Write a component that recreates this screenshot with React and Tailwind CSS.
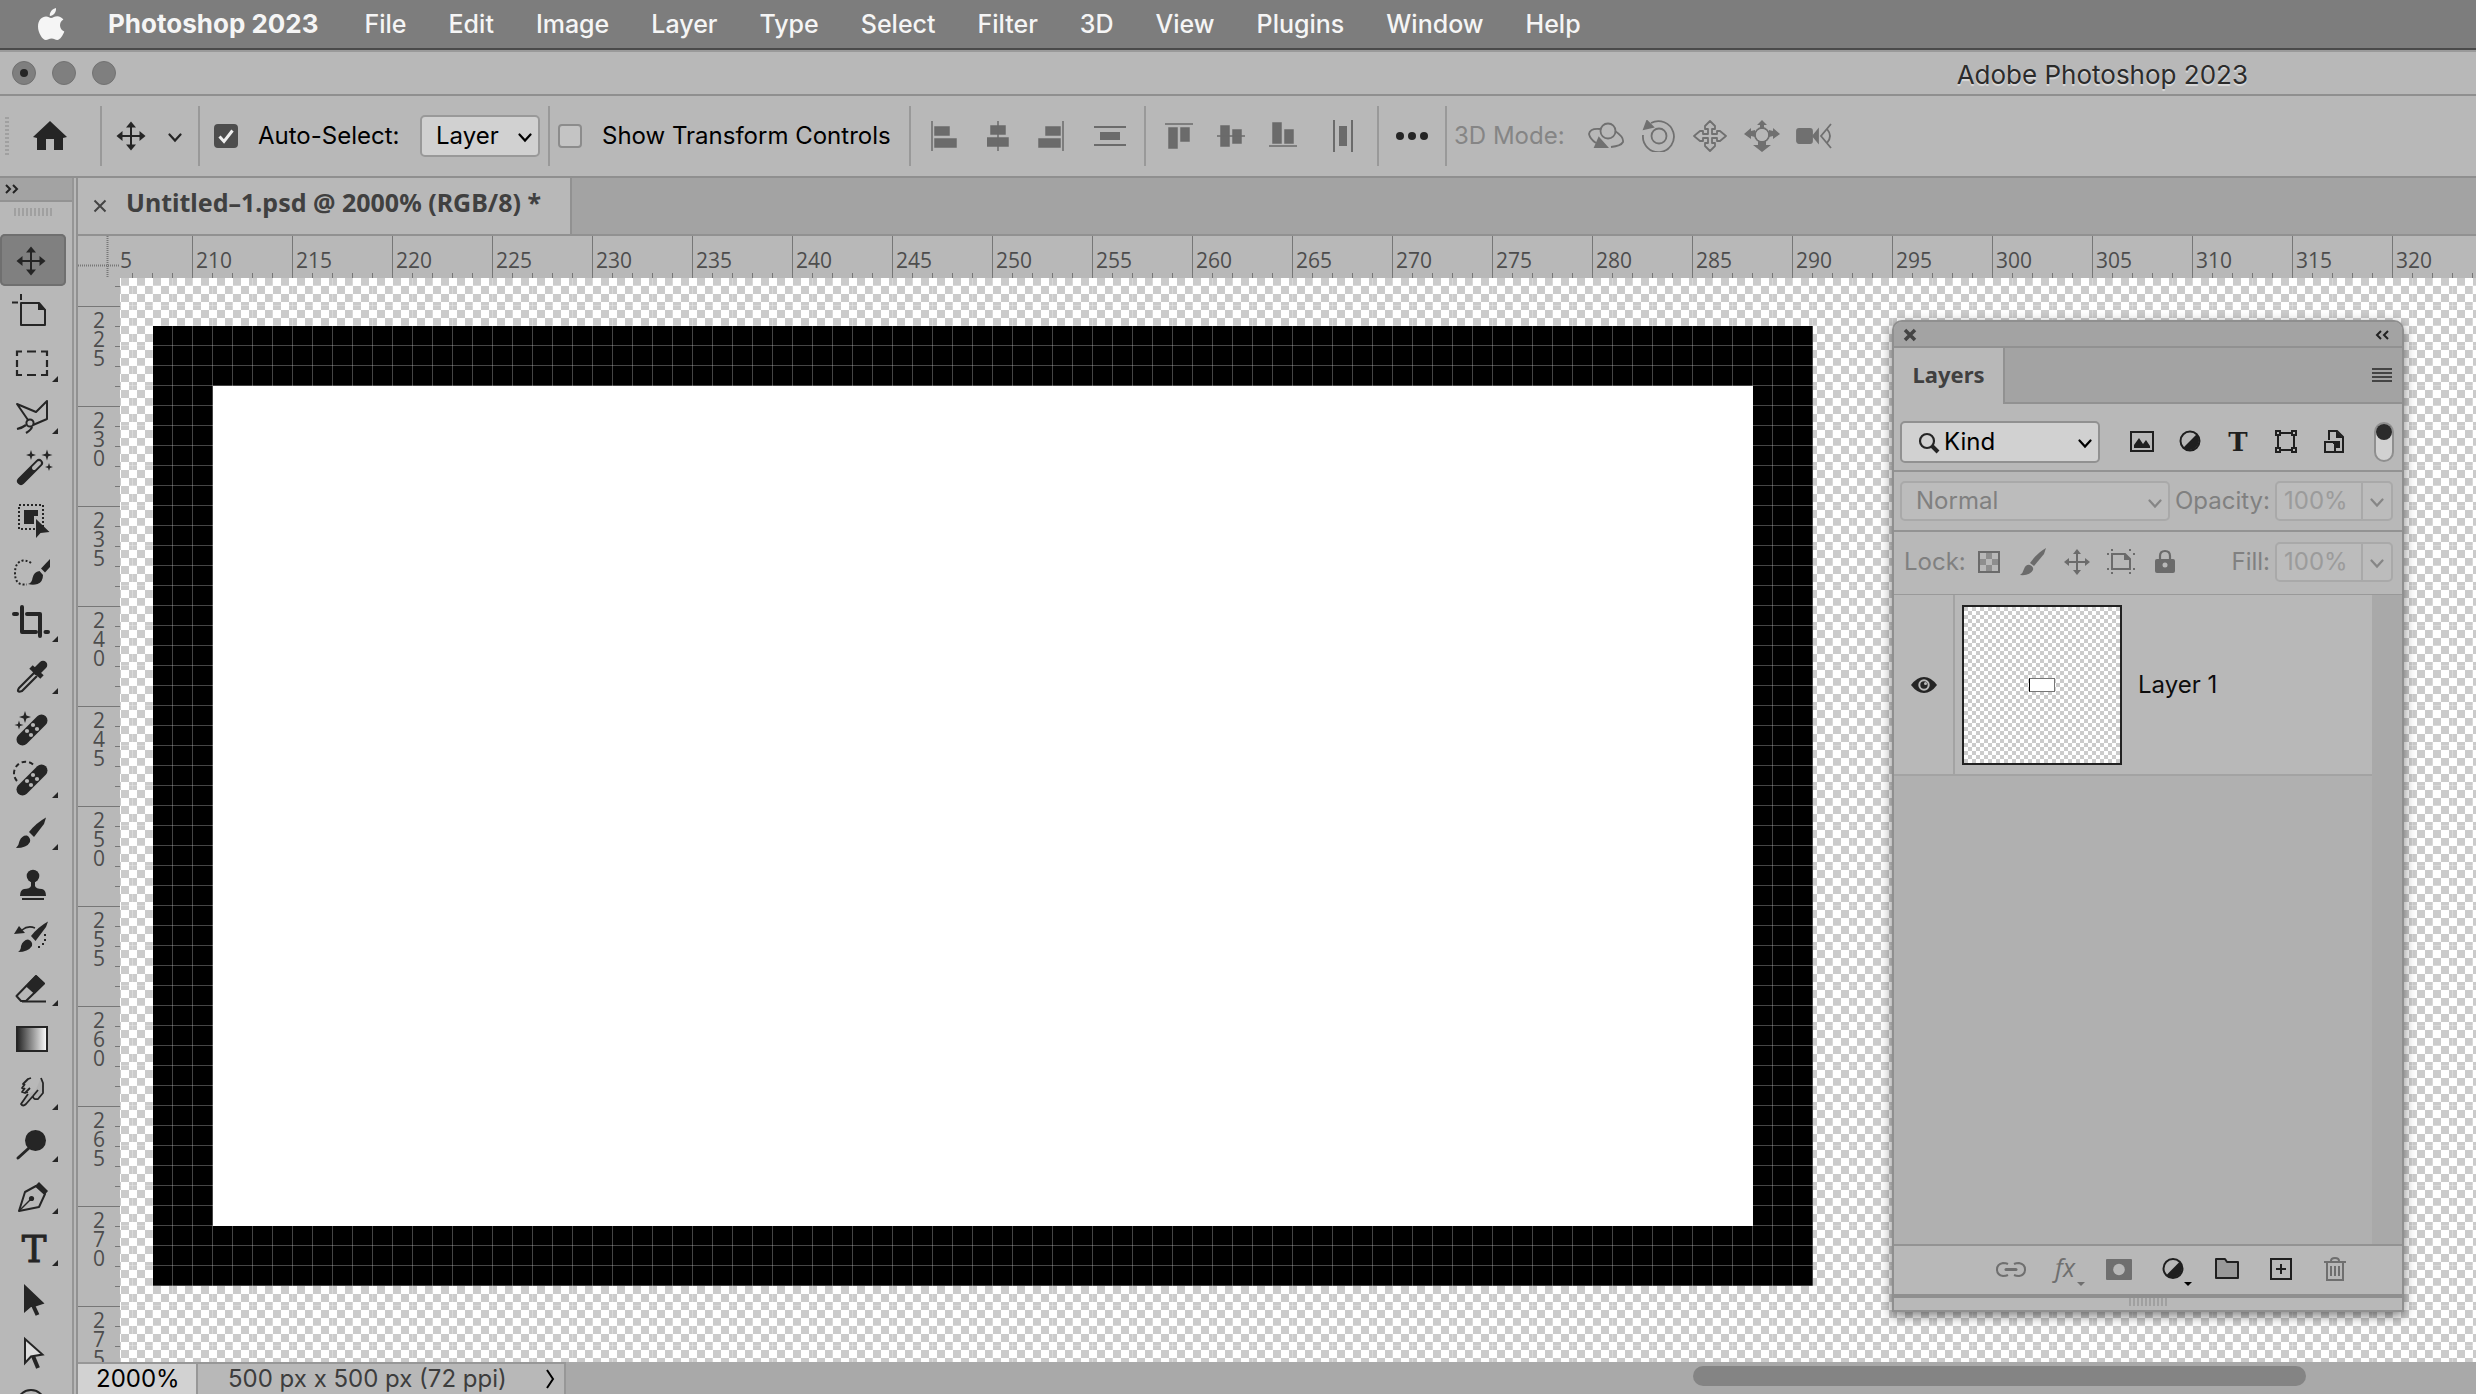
import { useState } from 'react'

const MENUS = ['File', 'Edit', 'Image', 'Layer', 'Type', 'Select', 'Filter', '3D', 'View', 'Plugins', 'Window', 'Help']

const H_TICKS = Array.from({ length: 24 }, (_, i) => 205 + i * 5)
const V_TICKS = Array.from({ length: 12 }, (_, i) => 220 + i * 5)

const INK = '#252525'
const SPARK = 'M0 -5 L1.2 -1.2 L5 0 L1.2 1.2 L0 5 L-1.2 1.2 L-5 0 L-1.2 -1.2 Z'

function Svg({ w, h, className = '', children }) {
  return (
    <svg width={w} height={h} viewBox={`0 0 ${w} ${h}`} fill="none" className={`block shrink-0 ${className}`} aria-hidden="true">
      {children}
    </svg>
  )
}

function Chevron({ className = '' }) {
  return (
    <Svg w={14} h={10} className={className}>
      <path d="M1.5 1.5 L7 7.5 L12.5 1.5" stroke="currentColor" strokeWidth="2.2" strokeLinecap="round" />
    </Svg>
  )
}

function Divider() {
  return <div className="w-[2px] h-[60px] shrink-0 bg-[#999999]" />
}

function Bandage({ dy = 0 }) {
  return (
    <g transform={`translate(0 ${dy})`}>
      <path d="M22.5 37.5 L41.5 18.5" stroke={INK} strokeWidth="12" strokeLinecap="round" />
      <g fill="#b8b8b8">
        <circle cx="27" cy="29" r="2.1" />
        <circle cx="31" cy="33" r="2.1" />
        <circle cx="33" cy="23" r="2.1" />
        <circle cx="37" cy="27" r="2.1" />
      </g>
    </g>
  )
}

function MoveArrows({ cx, cy, r, head = 5, sw = 2 }) {
  return (
    <g transform={`translate(${cx} ${cy})`}>
      <path d={`M${-r + 3} 0 H${r - 3} M0 ${-r + 3} V${r - 3}`} stroke="currentColor" strokeWidth={sw} />
      {[0, 90, 180, 270].map((a) => (
        <path key={a} transform={`rotate(${a})`} d={`M0 ${-r} L${head} ${-r + head + 1} H${-head} Z`} fill="currentColor" />
      ))}
    </g>
  )
}

// Every tool is drawn in the 66x52 box of its own button
const TOOLS = [
  { name: 'Move', art: <MoveArrows cx={31} cy={27} r={14.5} /> },
  {
    name: 'Artboard',
    art: (
      <>
        <path d="M12 16.5 H18 M21 8 V14" stroke={INK} strokeWidth="2" />
        <path d="M21 17 H39 L45 24 V39 H21 Z" stroke={INK} strokeWidth="2" strokeLinejoin="round" />
        <path d="M38 16 L46 24 H38 Z" fill={INK} />
      </>
    )
  },
  {
    name: 'Marquee',
    fly: true,
    art: (
      <path
        d="M17 18 V13.5 H22 M27 13.5 H36 M41 13.5 H47 V18 M47 22 V29 M47 32 V37 H41 M36 37 H27 M22 37 H17 V32 M17 29 V22"
        stroke={INK}
        strokeWidth="2.2"
      />
    )
  },
  {
    name: 'Polygonal Lasso',
    fly: true,
    art: (
      <>
        <path d="M28 30 L17 14 L36 22 L47 11 V29 L33 35" stroke={INK} strokeWidth="2" strokeLinejoin="round" />
        <circle cx="30" cy="33" r="3.6" stroke={INK} strokeWidth="2" />
        <path d="M17 39 Q22 38 26 35 M26 43 Q31 40 32 37" stroke={INK} strokeWidth="2.2" />
      </>
    )
  },
  {
    name: 'Magic Wand',
    art: (
      <>
        <path d="M21 39 L39 21" stroke={INK} strokeWidth="8" strokeLinecap="round" />
        <path d="M34 26 L39 21" stroke="#b8b8b8" strokeWidth="4" strokeLinecap="round" />
        <g fill={INK}>
          <path transform="translate(31 13)" d={SPARK} />
          <path transform="translate(47 13) scale(1.1)" d={SPARK} />
          <path transform="translate(49 25) scale(.8)" d={SPARK} />
        </g>
      </>
    )
  },
  {
    name: 'Object Selection',
    art: (
      <>
        <rect x="19" y="11" width="24" height="24" stroke={INK} strokeWidth="2" strokeDasharray="2 2" />
        <path d="M24 16 H38 V22 H34 V30 H24 Z" fill={INK} />
        <path d="M36 25 V44 L40.5 39 L49.5 38 Z" fill={INK} />
      </>
    )
  },
  {
    name: 'Quick Selection',
    art: (
      <>
        <path d="M31 17 Q28 14.5 23 14.5 Q15 16 15 27 Q15 38 23 38.5 H27" stroke={INK} strokeWidth="2" strokeDasharray="2 2" />
        <path d="M50 13 V21 L45 26.5 L41 22.5 Z" fill={INK} />
        <path d="M28 38 Q32 37 32.5 32 Q34 25.5 39.5 25 L43 29 Q43 36 37.5 38 Q33 39.5 28 38 Z" fill={INK} />
      </>
    )
  },
  {
    name: 'Crop',
    fly: true,
    art: (
      <path
        d="M22 9 V34 H36 M45.5 34 H48 M14 16 H17 M27 16 H40 V29 M40 26 V38"
        stroke={INK}
        strokeWidth="4"
        strokeLinecap="round"
        strokeLinejoin="round"
      />
    )
  },
  {
    name: 'Eyedropper',
    fly: true,
    art: (
      <>
        <path d="M34 23 L19 38 Q16 43 22 41 L37 26" stroke={INK} strokeWidth="2.2" strokeLinejoin="round" />
        <path d="M31 17 L42 27" stroke={INK} strokeWidth="5" />
        <path d="M37 21 L43 15" stroke={INK} strokeWidth="8.5" strokeLinecap="round" />
      </>
    )
  },
  {
    name: 'Spot Healing Brush',
    art: (
      <>
        <Bandage />
        <path transform="translate(25 15) scale(1.2)" d={SPARK} fill={INK} />
        <path transform="translate(19 23) scale(.9)" d={SPARK} fill={INK} />
      </>
    )
  },
  {
    name: 'Healing Brush',
    fly: true,
    art: (
      <>
        <Bandage dy={-2} />
        <path d="M17 27 A10 10 0 1 1 34 11.5" stroke={INK} strokeWidth="2" strokeDasharray="4.5 3" />
      </>
    )
  },
  {
    name: 'Brush',
    fly: true,
    art: (
      <>
        <path d="M46 11.5 L44 18 L34 31 L29 26 Q36 17 46 11.5 Z" fill={INK} />
        <path d="M16 42 Q19 39 19.5 35 Q22 29 27 29.5 Q31 32 30 36 Q27 42 16 42 Z" fill={INK} />
      </>
    )
  },
  {
    name: 'Clone Stamp',
    art: (
      <>
        <circle cx="33" cy="18" r="6.3" fill={INK} />
        <path d="M31 22 H35 V28 Q36 31 42 31 Q46 32 46 38 H20 Q20 32 24 31 Q30 31 31 28 Z" fill={INK} />
        <path d="M22 41 H44" stroke={INK} strokeWidth="2" />
      </>
    )
  },
  {
    name: 'History Brush',
    art: (
      <>
        <path d="M48 11.5 L46 17 L35.5 31 L31 26 Q38 17 48 11.5 Z" fill={INK} />
        <path d="M18 42 Q21 40 21 36 Q23 30 28 29.5 Q33 31 32 36 Q28 42 18 42 Z" fill={INK} />
        <path d="M19 16 L14 24 L25 23 Z" fill={INK} />
        <path d="M22 20 Q28 15 35 18" stroke={INK} strokeWidth="1.5" />
        <path d="M44 24 h2 v2 h-2z M44 29 h2 v2 h-2z M42 33 h2 v2 h-2z M38 36 h2 v2 h-2z" fill={INK} />
      </>
    )
  },
  {
    name: 'Eraser',
    fly: true,
    art: (
      <>
        <path d="M36 14 L44 21.5 L26 39 H21 L16.5 34 Z" stroke={INK} strokeWidth="2" strokeLinejoin="round" />
        <path d="M36 13 L45 21.5 L34.5 32 L25.5 24 Z" fill={INK} />
        <path d="M22 39.5 H46" stroke={INK} strokeWidth="2" />
      </>
    )
  },
  {
    name: 'Gradient',
    art: (
      <>
        <defs>
          <linearGradient id="toolGradient">
            <stop offset="0" stopColor="#222" />
            <stop offset="1" stopColor="#fff" />
          </linearGradient>
        </defs>
        <rect x="17" y="13" width="30" height="24" fill="url(#toolGradient)" stroke={INK} strokeWidth="2" />
      </>
    )
  },
  {
    name: 'Smudge',
    fly: true,
    art: (
      <path
        d="M31 12 L28 13 L23 18 L25 19 M25 18 L22 22 L24 23 M25 22 L22 26 L25 27 L30 22 M25 27 L28 26 M28 28 L21 38 Q23 41 26 38 L33 30 L38 24 M33 30 Q33 34 38 33 L43 27 V17 L41 12"
        fill="#b0b0b0"
        stroke={INK}
        strokeWidth="1.8"
        strokeLinejoin="round"
      />
    )
  },
  {
    name: 'Dodge',
    fly: true,
    art: (
      <>
        <circle cx="35.5" cy="22.5" r="10.5" fill={INK} />
        <path d="M29 30 L18 40" stroke={INK} strokeWidth="3" strokeLinecap="round" />
      </>
    )
  },
  {
    name: 'Pen',
    fly: true,
    art: (
      <>
        <path d="M19 41 L25 22 L36 16 L45 24 L39 37 Z" stroke={INK} strokeWidth="2" strokeLinejoin="round" />
        <path d="M35 16 L39 12 L48 21 L44.5 25 Z" fill={INK} />
        <circle cx="31.5" cy="28.5" r="2.6" fill={INK} />
        <path d="M19 41 L31 29" stroke={INK} strokeWidth="1.5" />
      </>
    )
  },
  {
    name: 'Type',
    fly: true,
    art: (
      <text x="34" y="40" textAnchor="middle" fontFamily="DejaVu Serif" fontWeight="400" fontSize="37" fill={INK} stroke={INK} strokeWidth="1">
        T
      </text>
    )
  },
  {
    name: 'Path Selection',
    art: (
      <>
        <path d="M24 10 V39 L31 33 H34 L44.5 29.5 Z" fill={INK} />
        <path d="M32 29 L37.5 41" stroke={INK} strokeWidth="4" />
      </>
    )
  },
  {
    name: 'Direct Selection',
    art: (
      <>
        <path d="M25 13 V37 L31 30.5 L42.5 28.5 Z" fill="#dedede" stroke={INK} strokeWidth="2" />
        <path d="M33 30 L38 42" stroke={INK} strokeWidth="4" />
      </>
    )
  },
  { name: 'Ellipse', art: <circle cx="31" cy="26" r="14" stroke={INK} strokeWidth="2" /> }
]

const ALIGN_H = [
  { name: 'Align left edges', w: 26, art: <path d="M1 0 v30 M4 6 h14 v8 h-14z M4 18 h21 v8 h-21z" /> },
  { name: 'Align horizontal centers', w: 22, art: <path d="M11 0 v30 M4 5 h14 v8 h-14z M0 17 h21 v8 h-21z" /> },
  { name: 'Align right edges', w: 26, art: <path d="M25 0 v30 M8 6 h14 v8 h-14z M1 18 h21 v8 h-21z" /> }
]

const ALIGN_V = [
  { name: 'Align top edges', art: <path d="M0 4 h28 M4 8 h8 v20 h-8z M16 8 h8 v13 h-8z" /> },
  { name: 'Align vertical centers', art: <path d="M0 16 h28 M4 6 h8 v20 h-8z M16 10 h8 v13 h-8z" /> },
  { name: 'Align bottom edges', art: <path d="M0 26 h28 M4 3 h8 v20 h-8z M16 10 h8 v13 h-8z" /> }
]

const MODES_3D = [
  {
    name: 'Orbit',
    art: (
      <>
        <ellipse cx="20" cy="11" rx="7.5" ry="7.5" />
        <path d="M12 9 Q2 8 1 14 Q2 19 8 23 M27 11 Q36 17 35 22 Q33 26 23 27" />
        <path d="M11 18 L19 27 H7 Z" fill="currentColor" />
      </>
    )
  },
  {
    name: 'Roll',
    art: (
      <>
        <circle cx="19" cy="16" r="7.5" />
        <path d="M11 3 A15.5 15.5 0 1 1 3 15" />
        <path d="M7 1 L13 7 L4 9 Z" fill="currentColor" />
      </>
    )
  },
  {
    name: 'Pan',
    art: (
      <path d="M18 1 L23 6 V9 H20 V14 H25 V11 H28 L34 16 L28 21 H25 V18 H20 V23 H23 V26 L18 31 L13 26 V23 H16 V18 H11 V21 H8 L2 16 L8 11 H11 V14 H16 V9 H13 V6 Z" strokeLinejoin="round" />
    )
  },
  {
    name: 'Slide',
    art: (
      <>
        <circle cx="18" cy="15" r="7" />
        <path d="M18 0 L23 5 H20 V8 H16 V5 H13 Z M0 14 L7 8 V11 L11 10 V17 L7 16 V19 Z M36 14 L29 8 V11 L25 10 V17 L29 16 V19 Z M14 21 H22 V25 H27 L18 32 L9 25 H14 Z" fill="currentColor" stroke="none" />
        <circle cx="18" cy="15" r="6" fill="#b8b8b8" stroke="none" />
      </>
    )
  },
  {
    name: 'Zoom camera',
    art: (
      <>
        <rect x="1" y="9" width="15" height="14" rx="2" fill="currentColor" />
        <path d="M17 16 L22 10 V22 Z" fill="currentColor" />
        <path d="M35 4 L25 16 L35 28 M31 9 Q37 16 31 23" />
      </>
    )
  }
]

const FILTERS = [
  {
    name: 'Pixel layers',
    art: (
      <>
        <rect x="3" y="4" width="22" height="19" stroke="currentColor" strokeWidth="2" />
        <path d="M6 20 V17 L11 10 L15 16 L18 12 L22 18 V20 Z" fill="currentColor" />
      </>
    )
  },
  {
    name: 'Adjustment layers',
    art: (
      <>
        <circle cx="14" cy="13" r="9.5" stroke="currentColor" strokeWidth="2" />
        <path d="M20.7 6.3 A9.5 9.5 0 0 1 7.3 19.7 Z" fill="currentColor" />
      </>
    )
  },
  {
    name: 'Type layers',
    art: (
      <text x="14" y="23" textAnchor="middle" fontFamily="DejaVu Serif" fontWeight="700" fontSize="26" fill="currentColor">
        T
      </text>
    )
  },
  {
    name: 'Shape layers',
    art: (
      <>
        <path d="M8 5 H20 M8 22 H20 M6 8 V19 M22 8 V19" stroke="currentColor" strokeWidth="2" />
        <path d="M4 3 h4 v4 h-4z M20 3 h4 v4 h-4z M4 20 h4 v4 h-4z M20 20 h4 v4 h-4z" stroke="currentColor" strokeWidth="2" />
      </>
    )
  },
  {
    name: 'Smart objects',
    art: (
      <>
        <path d="M9 12 V3 H17 L23 9 V24 H16" stroke="currentColor" strokeWidth="2" />
        <path d="M16 3 L23 10 H16 Z M13 13 H20 V20 H16 V16 H13 Z" fill="currentColor" />
        <rect x="5" y="14" width="10" height="10" stroke="currentColor" strokeWidth="2" />
      </>
    )
  }
]

const LOCKS = [
  {
    name: 'Lock transparent pixels',
    art: (
      <>
        <rect x="4" y="4" width="20" height="20" stroke="currentColor" strokeWidth="2" />
        <path d="M11 5 h6 v6 h-6z M5 11 h6 v6 h-6z M17 11 h6 v6 h-6z M11 17 h6 v6 h-6z" fill="#8e8e8e" />
      </>
    )
  },
  {
    name: 'Lock image pixels',
    art: (
      <>
        <path d="M27 0 L25 6 L15 18 L11 15 Q18 5 27 0 Z" fill="currentColor" />
        <path d="M1 27 Q4 25 5 21 Q7 16 11 17 Q15 19 14 22 Q11 28 1 27 Z" fill="currentColor" />
      </>
    )
  },
  { name: 'Lock position', art: <MoveArrows cx={14} cy={14} r={13} head={4} sw={2} /> },
  {
    name: 'Prevent auto-nesting',
    art: (
      <>
        <path d="M5 6 H18 L23 11 V21 H5 Z" stroke="currentColor" strokeWidth="2" />
        <path d="M17 5 L24 12 H17 Z" fill="currentColor" />
        <path d="M4 1 h2 v2 h-2z M22 1 h2 v2 h-2z M0 5 h2 v2 h-2z M26 5 h2 v2 h-2z M0 20 h2 v2 h-2z M26 20 h2 v2 h-2z M4 24 h2 v2 h-2z M22 24 h2 v2 h-2z" fill="currentColor" />
      </>
    )
  },
  {
    name: 'Lock all',
    art: (
      <>
        <path d="M9 12 V8 Q9 3 14 3 Q19 3 19 8 V12" stroke="currentColor" strokeWidth="2.2" />
        <rect x="4" y="11" width="20" height="14" rx="2" fill="currentColor" />
        <circle cx="14" cy="17" r="2.5" fill="#b8b8b8" />
      </>
    )
  }
]

const PANEL_ACTIONS = [
  {
    name: 'Link layers',
    color: 'text-[#6f6f6f]',
    art: (
      <>
        <path d="M15 9 Q13 8 10 8 Q4 9 4 14.5 Q4 20 10 21 Q13 21 15 20 M21 9 Q23 8 26 8 Q32 9 32 14.5 Q32 20 26 21 Q23 21 21 20" stroke="currentColor" strokeWidth="2" />
        <path d="M13 14.5 H23" stroke="currentColor" strokeWidth="3" strokeLinecap="round" />
      </>
    )
  },
  {
    name: 'Layer style',
    color: 'text-[#6f6f6f]',
    art: (
      <>
        <text x="18" y="22" textAnchor="middle" fontFamily="Open Sans" fontStyle="italic" fontSize="25" fill="currentColor">
          fx
        </text>
        <path d="M30 27 h8 l-4 4z" fill="currentColor" />
      </>
    )
  },
  {
    name: 'Layer mask',
    color: 'text-[#6f6f6f]',
    art: (
      <>
        <rect x="5" y="4" width="26" height="21" rx="1" fill="currentColor" />
        <circle cx="18" cy="14.500" r="5.800" fill="#b8b8b8" />
      </>
    )
  },
  {
    name: 'New adjustment layer',
    color: 'text-[#1f1f1f]',
    art: (
      <>
        <circle cx="18" cy="13.5" r="9.5" stroke="currentColor" strokeWidth="2" />
        <path d="M24.7 6.8 A9.5 9.5 0 0 1 11.3 20.2 Z" fill="currentColor" />
        <path d="M29 27 h8 l-4 4z" fill="#000" />
      </>
    )
  },
  {
    name: 'New group',
    color: 'text-[#1f1f1f]',
    art: <path d="M7 4 H16 L18 7 H29 V23 H7 Z" fill="#999" stroke="currentColor" strokeWidth="2" strokeLinejoin="round" />
  },
  {
    name: 'New layer',
    color: 'text-[#1f1f1f]',
    art: (
      <>
        <rect x="8" y="4" width="20" height="20" stroke="currentColor" strokeWidth="2" />
        <path d="M13 14 H23 M18 9 V19" stroke="currentColor" strokeWidth="2" />
      </>
    )
  },
  {
    name: 'Delete layer',
    color: 'text-[#6f6f6f]',
    art: (
      <>
        <path d="M7 7 H29 M14 6 Q14 3 18 3 Q22 3 22 6" stroke="currentColor" strokeWidth="2" />
        <path d="M10 7 V25 H26 V7 M14 11 V21 M18 11 V21 M22 11 V21" stroke="currentColor" strokeWidth="2" />
      </>
    )
  }
]

function MenuBar() {
  return (
    <nav className="flex items-center h-[50px] pl-[37px] shrink-0 bg-[#7d7d7d] border-b-2 border-[#4a4a4a] text-[#f5f5f5] text-[25px] leading-8 [text-shadow:0_3px_5px_rgba(0,0,0,0.35)]">
      <button aria-label="Apple menu" className="mr-[43px]">
        <svg width="28" height="33" viewBox="0 0 28 33" fill="currentColor" className="block">
          <path d="M19 0 C19.5 4 16.5 7.8 12.8 8 C12.3 4.3 15.5 .7 19 0 Z" />
          <path d="M14 10 C16 10 17.5 8.3 20.3 8.3 C22.6 8.3 25 9.6 26.4 11.6 C21.4 14.5 22.2 21.6 27.3 23.6 C26 27.3 23.2 32 20.3 32 C18.2 32 17.2 30.6 14.6 30.6 C12 30.6 10.9 32 8.9 32 C5.5 32 1 24.8 1 18.5 C1 12 5 8.5 9 8.5 C11.4 8.5 12.7 10 14 10 Z" />
        </svg>
      </button>
      <button className="font-bold text-[26px] mr-[46px] whitespace-nowrap">Photoshop 2023</button>
      <div className="flex gap-[42px]">
        {MENUS.map((m) => (
          <button key={m} className="font-medium">{m}</button>
        ))}
      </div>
    </nav>
  )
}

function TitleBar() {
  return (
    <div className="flex items-center h-[46px] shrink-0 pl-3 pr-[228px] border-t-2 border-t-[#9a9a9a] border-b-2 border-b-[#8f8f8f]">
      <div className="flex gap-4">
        <button aria-label="Close" className="flex items-center justify-center size-6 rounded-full bg-[#7f7f7f] border border-[#707070]">
          <span className="size-2 rounded-full bg-[#252525]" />
        </button>
        <button aria-label="Minimize" className="size-6 rounded-full bg-[#7f7f7f] border border-[#727272]" />
        <button aria-label="Zoom" className="size-6 rounded-full bg-[#7f7f7f] border border-[#727272]" />
      </div>
      <h1 className="ml-auto pt-1 text-[26px] leading-8 text-[#2b2b2b] [text-shadow:0_2px_1px_rgba(255,255,255,0.5)]">Adobe Photoshop 2023</h1>
    </div>
  )
}

function CheckBox({ id, checked, onChange }) {
  return (
    <span className="relative block size-6 shrink-0">
      <input
        id={id}
        type="checkbox"
        checked={checked}
        onChange={(e) => onChange(e.target.checked)}
        className="block appearance-none size-6 rounded-[4px] border-2 border-[#8c8c8c] bg-[#c4c4c4] checked:bg-[#4d4d4d] checked:border-[#4d4d4d]"
      />
      {checked && (
        <svg width="24" height="24" viewBox="0 0 24 24" fill="none" className="absolute inset-0 pointer-events-none">
          <path d="M5.5 12.5 L10 17.5 L18.5 6.5" stroke="#efefef" strokeWidth="3" />
        </svg>
      )}
    </span>
  )
}

function OptionsBar() {
  const [autoSelect, setAutoSelect] = useState(true)
  const [transform, setTransform] = useState(false)

  return (
    <div className="flex items-center h-[82px] shrink-0 border-b-2 border-[#8f8f8f] text-2xl leading-8 text-black whitespace-nowrap">
      <div className="ml-[5px] w-1 h-[38px] bg-[repeating-linear-gradient(#a0a0a0_0_2px,transparent_2px_4px)]" />
      <button aria-label="Home" className="ml-6 mr-[33px] text-[#252525]">
        <Svg w={34} h={32}>
          <path d="M17 1 L34 17 L30 18 V30 H21 V19 H13 V30 H4 V18 L0 17 Z" fill="currentColor" />
        </Svg>
      </button>
      <Divider />
      <button aria-label="Tool preset" className="flex items-center ml-[13px] mr-4 text-[#252525]">
        <Svg w={32} h={32}>
          <MoveArrows cx={16} cy={16} r={14.5} />
        </Svg>
        <Chevron className="ml-[21px] mt-1" />
      </button>
      <Divider />
      <div className="flex items-center w-[206px] ml-[14px] gap-5">
        <CheckBox id="auto-select" checked={autoSelect} onChange={setAutoSelect} />
        <label htmlFor="auto-select">Auto-Select:</label>
      </div>
      <div className="relative mr-2">
        <select aria-label="Auto-select target" className="block appearance-none w-[120px] h-[42px] pl-[14px] rounded-[5px] border-2 border-[#999999] bg-[#d1d1d1]">
          <option>Layer</option>
          <option>Group</option>
        </select>
        <Chevron className="absolute right-2 top-[18px] pointer-events-none" />
      </div>
      <Divider />
      <div className="flex items-center w-[351px] ml-2 gap-5">
        <CheckBox id="show-transform" checked={transform} onChange={setTransform} />
        <label htmlFor="show-transform">Show Transform Controls</label>
      </div>
      <Divider />
      <div className="flex items-center justify-between w-[195px] ml-5 mr-[18px] text-[#6b6b6b]">
        {ALIGN_H.map(({ name, w, art }) => (
          <button key={name} aria-label={name}>
            <Svg w={w} h={30}>
              <g fill="currentColor" stroke="currentColor" strokeWidth="1.5">{art}</g>
            </Svg>
          </button>
        ))}
        <button aria-label="Distribute vertically">
          <Svg w={32} h={30}>
            <path d="M0 6 h32 M0 24 h32" stroke="currentColor" strokeWidth="2" />
            <rect x="6" y="11" width="20" height="8" fill="currentColor" />
          </Svg>
        </button>
      </div>
      <Divider />
      <div className="flex items-center gap-6 ml-[19px] mr-6 text-[#6b6b6b]">
        {ALIGN_V.map(({ name, art }) => (
          <button key={name} aria-label={name}>
            <Svg w={28} h={32}>
              <g fill="currentColor" stroke="currentColor" strokeWidth="1.5">{art}</g>
            </Svg>
          </button>
        ))}
        <button aria-label="Distribute horizontally" className="ml-3">
          <Svg w={20} h={32}>
            <path d="M1 0 v32 M19 0 v32" stroke="currentColor" strokeWidth="2" />
            <rect x="6" y="6" width="8" height="20" fill="currentColor" />
          </Svg>
        </button>
      </div>
      <Divider />
      <button aria-label="More options" className="flex gap-1 ml-[17px] mr-[17px]">
        <span className="size-2 rounded-full bg-[#252525]" />
        <span className="size-2 rounded-full bg-[#252525]" />
        <span className="size-2 rounded-full bg-[#252525]" />
      </button>
      <Divider />
      <div className="w-[141px] pl-[7px] text-[#858585]">3D Mode:</div>
      <div className="flex gap-4 text-[#707070]">
        {MODES_3D.map(({ name, art }) => (
          <button key={name} aria-label={name}>
            <Svg w={36} h={32}>
              <g stroke="currentColor" strokeWidth="1.8">{art}</g>
            </Svg>
          </button>
        ))}
      </div>
    </div>
  )
}

function Toolbar() {
  const [active, setActive] = useState('Move')

  return (
    <aside className="w-[74px] shrink-0 overflow-hidden border-r-2 border-[#959595]">
      <div className="flex items-center h-6 pl-[5px] bg-[#a3a3a3] border-b-2 border-[#939393]">
        <button aria-label="Expand tools">
          <Svg w={14} h={10}>
            <path d="M1 1 L5 5 L1 9 M8 1 L12 5 L8 9" stroke="#222" strokeWidth="2" />
          </Svg>
        </button>
      </div>
      <div className="ml-[14px] mt-1.5 mb-[18px] w-[38px] h-2 bg-[repeating-linear-gradient(90deg,#a0a0a0_0_2px,transparent_2px_4px)]" />
      {TOOLS.map(({ name, fly, art }) => (
        <button
          key={name}
          aria-label={name}
          onClick={() => setActive(name)}
          className={
            'block w-[66px] h-[52px] rounded-[5px] text-[#252525] ' +
            (name === active ? 'bg-[#808080] shadow-[inset_0_0_0_2px_#6f6f6f]' : '')
          }
        >
          <Svg w={66} h={52}>
            {art}
            {fly && <path d="M58 38 V44 H52 Z" fill={INK} />}
          </Svg>
        </button>
      ))}
    </aside>
  )
}

function DocumentTabs() {
  return (
    <div className="flex h-[58px] shrink-0 bg-[#a3a3a3] border-b-2 border-[#919191]">
      <div className="flex items-center w-[494px] pl-[15px] bg-[#b8b8b8] border-r-2 border-[#919191] whitespace-nowrap">
        <button aria-label="Close document" className="mr-[19px] text-[#444]">
          <Svg w={14} h={14}>
            <path d="M1.5 1.5 L12.5 12.5 M12.5 1.5 L1.5 12.5" stroke="currentColor" strokeWidth="2" />
          </Svg>
        </button>
        <span className="pb-1.5 font-['Noto_Sans','Open_Sans',sans-serif] font-bold text-[25px] text-[#404040]">
          Untitled–1.psd @ 2000% (RGB/8) *
        </span>
      </div>
    </div>
  )
}

function HorizontalRuler() {
  return (
    <div className="flex h-[42px] shrink-0 font-['Open_Sans','Noto_Sans',sans-serif] text-[21px] leading-[21px] text-[#4d4d4d]">
      <div className="w-[42px] shrink-0">
        <Svg w={42} h={42}>
          <path d="M29.5 0 V42 M0 29.5 H42" stroke="#777" strokeWidth="2" strokeDasharray="1 1" />
        </Svg>
      </div>
      <div className="flex-1 min-w-0 overflow-hidden">
        <div className="flex h-full -ml-7">
          {H_TICKS.map((n) => (
            <div
              key={n}
              className="w-[100px] h-full shrink-0 pl-[3px] pt-[14px] border-l border-[#777] bg-[repeating-linear-gradient(90deg,transparent_0_19px,#777_19px_20px)] bg-[length:99px_5px] bg-bottom-left bg-no-repeat"
            >
              {n}
            </div>
          ))}
        </div>
      </div>
    </div>
  )
}

function VerticalRuler() {
  return (
    <div className="w-[42px] shrink-0 overflow-hidden font-['Open_Sans','Noto_Sans',sans-serif] text-[21px] leading-[19px] text-[#4d4d4d]">
      <div className="-mt-[72px]">
        {V_TICKS.map((n) => (
          <div
            key={n}
            className="flex flex-col items-center h-[100px] pt-1 border-t border-[#777] bg-[repeating-linear-gradient(transparent_0_19px,#777_19px_20px)] bg-[length:5px_99px] bg-top-right bg-no-repeat"
          >
            {String(n).split('').map((d, i) => (
              <span key={i}>{d}</span>
            ))}
          </div>
        ))}
      </div>
    </div>
  )
}

function PercentField({ id, label }) {
  return (
    <>
      <label htmlFor={id} className="ml-auto mr-[5px] text-[#808080]">{label}</label>
      <div className="flex w-[118px] h-10 rounded-[5px] border-2 border-[#a9a9a9] bg-[#bcbcbc] text-[#9b9b9b]">
        <input id={id} defaultValue="100%" disabled className="w-[86px] pl-[7px] border-r-2 border-[#a9a9a9]" />
        <button aria-label={`${label} slider`} className="flex flex-1 items-center justify-center pt-1 text-[#868686]">
          <Chevron />
        </button>
      </div>
    </>
  )
}

function LayersPanel() {
  return (
    <section
      aria-label="Layers"
      className="absolute right-[72px] top-[42px] bottom-[50px] w-[512px] flex flex-col rounded-t-[10px] border-2 border-[#8f8f8f] bg-[#b8b8b8] shadow-[0_4px_12px_rgba(0,0,0,0.5)] overflow-hidden text-2xl leading-8"
    >
      <div className="flex items-center justify-between h-[26px] shrink-0 pl-[9px] pr-[13px] pt-0.5 bg-[#a3a3a3] border-b-2 border-[#919191]">
        <button aria-label="Close panel">
          <Svg w={14} h={14}>
            <path d="M2 2 L12 12 M12 2 L2 12" stroke="#444" strokeWidth="3.5" />
          </Svg>
        </button>
        <button aria-label="Collapse panel">
          <Svg w={14} h={10}>
            <path d="M6 1 L2 5 L6 9 M13 1 L9 5 L13 9" stroke="#222" strokeWidth="2" />
          </Svg>
        </button>
      </div>
      <div className="flex h-14 shrink-0 bg-[#a3a3a3]">
        <button className="w-[111px] pb-1 border-r-2 border-[#919191] bg-[#b8b8b8] font-['Noto_Sans','Open_Sans',sans-serif] font-bold text-[22px] text-[#404040]">
          Layers
        </button>
        <div className="flex flex-1 items-center justify-end pr-[10px] border-b-2 border-[#919191]">
          <button aria-label="Panel menu">
            <Svg w={20} h={14}>
              <path d="M0 1 H20 M0 5 H20 M0 9 H20 M0 13 H20" stroke="#444" strokeWidth="2" />
            </Svg>
          </button>
        </div>
      </div>

      <div className="flex items-center h-[68px] shrink-0 pt-[10px] pl-[6px] pr-2 border-b-2 border-[#939393]">
        <div className="relative">
          <select aria-label="Filter by" className="block appearance-none w-[200px] h-[42px] pl-[42px] rounded-[5px] border-2 border-[#919191] bg-[#d1d1d1] text-black">
            <option>Kind</option>
            <option>Name</option>
          </select>
          <Svg w={22} h={22} className="absolute left-[18px] top-[11px] pointer-events-none">
            <circle cx="9" cy="9" r="7" stroke="#252525" strokeWidth="2.2" />
            <path d="M14 14 L20 20" stroke="#252525" strokeWidth="4" />
          </Svg>
          <Chevron className="absolute right-2 top-[18px] pointer-events-none" />
        </div>
        <div className="flex gap-5 ml-7 text-[#1f1f1f]">
          {FILTERS.map(({ name, art }) => (
            <button key={name} aria-label={name}>
              <Svg w={28} h={28}>{art}</Svg>
            </button>
          ))}
        </div>
        <button aria-label="Toggle filtering" className="flex items-start w-5 h-10 ml-auto rounded-full border-2 border-[#8f8f8f] bg-[#d1d1d1]">
          <span className="block size-4 rounded-full bg-[#2b2b2b]" />
        </button>
      </div>

      <div className="flex items-center h-[60px] shrink-0 pl-[6px] pr-[9px] border-b-2 border-[#939393]">
        <div className="relative">
          <select aria-label="Blend mode" disabled className="block appearance-none w-[270px] h-10 pl-[14px] rounded-[5px] border-2 border-[#a9a9a9] bg-[#bcbcbc] text-[#808080] opacity-100">
            <option>Normal</option>
          </select>
          <Chevron className="absolute right-2 top-[18px] pointer-events-none text-[#868686]" />
        </div>
        <PercentField id="opacity" label="Opacity:" />
      </div>

      <div className="flex items-center h-[63px] shrink-0 pl-[10px] pr-[9px] pb-0.5 border-b border-[#999]">
        <span className="w-[71px] text-[#808080]">Lock:</span>
        <div className="flex gap-4 text-[#6b6b6b]">
          {LOCKS.map(({ name, art }) => (
            <button key={name} aria-label={name}>
              <Svg w={28} h={28}>{art}</Svg>
            </button>
          ))}
        </div>
        <PercentField id="fill" label="Fill:" />
      </div>

      <div className="flex flex-1 min-h-0 bg-[#b0b0b0]">
        <div className="flex-1">
          <div className="flex items-stretch h-[181px] border-b-2 border-[#a3a3a3] bg-[#b8b8b8]">
            <button aria-label="Layer visibility" className="flex items-center justify-center w-[61px] border-r-2 border-[#a3a3a3]">
              <Svg w={26} h={18}>
                <path d="M0 9 Q6 1 13 1 Q20 1 26 9 Q20 17 13 17 Q6 17 0 9 Z" fill="#252525" />
                <circle cx="13" cy="9" r="4.7" fill="#252525" stroke="#b8b8b8" strokeWidth="2" />
                <circle cx="14.5" cy="7.5" r="1.5" fill="#b8b8b8" />
              </Svg>
            </button>
            <button className="flex items-center pl-[7px]">
              <span className="flex items-center justify-center size-40 border-2 border-[#222] bg-[repeating-conic-gradient(#fff_0_25%,#cbcbcb_0_50%)] bg-[length:8px_8px]">
                <span className="w-[26px] h-[14px] border border-[#777] border-l-black bg-white" />
              </span>
              <span className="ml-4 text-[#0d0d0d]">Layer 1</span>
            </button>
          </div>
        </div>
        <div className="w-[30px] bg-[#a9a9a9]" />
      </div>

      <div className="flex items-center justify-end gap-[18px] h-[50px] shrink-0 pr-[49px] border-t-2 border-[#939393]">
        {PANEL_ACTIONS.map(({ name, color, art }) => (
          <button key={name} aria-label={name} className={color}>
            <svg width="36" height="32" viewBox="0 0 36 32" fill="none" className="block mt-0.5 overflow-visible">{art}</svg>
          </button>
        ))}
      </div>
      <div className="flex justify-center h-4 shrink-0 border-t-4 border-[#8f8f8f]">
        <div className="w-[38px] h-2 bg-[repeating-linear-gradient(90deg,#a0a0a0_0_2px,transparent_2px_4px)]" />
      </div>
    </section>
  )
}

function Canvas() {
  return (
    <main className="relative flex-1 min-w-0 overflow-hidden bg-[repeating-conic-gradient(#fff_0_25%,#cbcbcb_0_50%)] bg-[length:16px_16px] bg-[position:1px_0px]">
      {/* artwork: outlined rectangle on Layer 1 */}
      <div className="absolute left-[33px] top-12 w-[1660px] h-[960px] p-[60px] bg-black">
        <div className="w-full h-full bg-white" />
      </div>
      {/* pixel grid */}
      <div className="absolute inset-0 bg-[linear-gradient(90deg,rgba(255,255,255,0.27)_1px,transparent_1px),linear-gradient(rgba(255,255,255,0.27)_1px,transparent_1px)] bg-[length:20px_20px] bg-[position:12px_7px]" />
      <LayersPanel />
    </main>
  )
}

function StatusBar() {
  return (
    <footer className="flex h-8 shrink-0 bg-[#a9a9a9] text-2xl leading-8 whitespace-nowrap">
      <input aria-label="Zoom level" defaultValue="2000%" className="w-[120px] pl-[18px] border-t-2 border-r-2 border-[#979797] bg-[#d2d2d2] text-black" />
      <div className="flex items-center w-[368px] pl-[30px] pr-[9px] border-t-2 border-r-2 border-[#979797] bg-[#b8b8b8] text-[#3d3d3d]">
        500 px x 500 px (72 ppi)
        <button aria-label="Status options" className="ml-auto">
          <Svg w={10} h={20}>
            <path d="M2 1 L8 10 L2 19" stroke="#000" strokeWidth="2" />
          </Svg>
        </button>
      </div>
      <div className="flex flex-1 justify-end items-center pb-1 pr-[170px]">
        <div className="w-[613px] h-5 rounded-full bg-[#848484]" />
      </div>
    </footer>
  )
}

export default function App() {
  return (
    <div className="flex flex-col h-screen overflow-hidden bg-[#b8b8b8] font-['Inter','Liberation_Sans',sans-serif]">
      <MenuBar />
      <TitleBar />
      <OptionsBar />
      <div className="flex flex-1 min-h-0">
        <Toolbar />
        <div className="flex flex-col flex-1 min-w-0 ml-0.5 border-l-2 border-[#919191]">
          <DocumentTabs />
          <HorizontalRuler />
          <div className="flex flex-1 min-h-0">
            <VerticalRuler />
            <Canvas />
          </div>
          <StatusBar />
        </div>
      </div>
    </div>
  )
}
